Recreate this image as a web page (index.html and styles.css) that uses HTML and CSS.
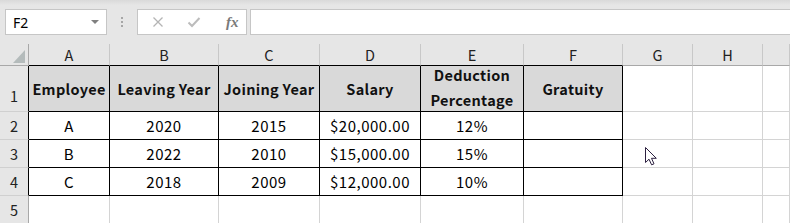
FILE: index.html
```html
<!DOCTYPE html>
<html>
	<head>
		<title>Gratuity</title>
		<link rel="stylesheet" href="styles.css">
	</head>
	<body>

		<div class="barra">
			<div class="nomeCaixa">
				<span class="nomeTexto">F2</span>
				<span class="seta"></span>
			</div>
			<div class="pontos">
				<span></span><span></span><span></span>
			</div>
			<div class="botoes">
				<svg class="icone" width="12" height="12" viewBox="0 0 12 12">
					<path d="M1.5 1.5 L10.5 10.5 M10.5 1.5 L1.5 10.5" stroke="#b4b4b4" stroke-width="1.3" fill="none"/>
				</svg>
				<svg class="icone" width="14" height="12" viewBox="0 0 14 12">
					<path d="M1.5 6.5 L5 10 L12.5 2" stroke="#bcbcbc" stroke-width="2" fill="none"/>
				</svg>
				<span class="fx">fx</span>
			</div>
			<div class="formula"></div>
		</div>

		<div class="planilha">
			<div class="canto"><span class="triangulo"></span></div>
			<div class="colCab">A</div>
			<div class="colCab">B</div>
			<div class="colCab">C</div>
			<div class="colCab">D</div>
			<div class="colCab">E</div>
			<div class="colCab">F</div>
			<div class="colCab fora">G</div>
			<div class="colCab fora">H</div>
			<div class="colCab fora"></div>

			<div class="linCab dentro baixo">1</div>
			<div class="cel tab titulo">Employee</div>
			<div class="cel tab titulo">Leaving Year</div>
			<div class="cel tab titulo">Joining Year</div>
			<div class="cel tab titulo">Salary</div>
			<div class="cel tab titulo duas">Deduction<br>Percentage</div>
			<div class="cel tab titulo">Gratuity</div>
			<div class="cel"></div>
			<div class="cel"></div>
			<div class="cel"></div>

			<div class="linCab dentro">2</div>
			<div class="cel tab">A</div>
			<div class="cel tab">2020</div>
			<div class="cel tab">2015</div>
			<div class="cel tab">$20,000.00</div>
			<div class="cel tab">12%</div>
			<div class="cel tab"></div>
			<div class="cel"></div>
			<div class="cel"></div>
			<div class="cel"></div>

			<div class="linCab dentro">3</div>
			<div class="cel tab">B</div>
			<div class="cel tab">2022</div>
			<div class="cel tab">2010</div>
			<div class="cel tab">$15,000.00</div>
			<div class="cel tab">15%</div>
			<div class="cel tab"></div>
			<div class="cel"></div>
			<div class="cel"></div>
			<div class="cel"></div>

			<div class="linCab dentro">4</div>
			<div class="cel tab">C</div>
			<div class="cel tab">2018</div>
			<div class="cel tab">2009</div>
			<div class="cel tab">$12,000.00</div>
			<div class="cel tab">10%</div>
			<div class="cel tab"></div>
			<div class="cel"></div>
			<div class="cel"></div>
			<div class="cel"></div>

			<div class="linCab">5</div>
			<div class="cel"></div>
			<div class="cel"></div>
			<div class="cel"></div>
			<div class="cel"></div>
			<div class="cel"></div>
			<div class="cel"></div>
			<div class="cel"></div>
			<div class="cel"></div>
			<div class="cel"></div>

			<svg class="cursor" width="14" height="20" viewBox="0 0 14 20">
				<path d="M0.5 0.5 L0.5 15.5 L4 12.2 L6.6 17.8 L9 16.8 L6.5 11.3 L11.3 11.3 Z" fill="#ffffff" stroke="#2c2040" stroke-width="1"/>
			</svg>
		</div>

	</body>
</html>
```

FILE: styles.css
```css
   body {
		margin: 0;
		width: 790px;
		height: 223px;
		overflow: hidden;
		background-color: #ffffff;
		font-family: "Noto Sans CJK JP", "Noto Sans", sans-serif;
   }

   .barra {
		height: 44px;
		background: linear-gradient(#d9d9d9, #e6e6e6 5px);
		display: flex;
		align-items: flex-start;
		padding-top: 9px;
		padding-left: 5px;
		box-sizing: border-box;
   }

   .nomeCaixa {
		width: 102px;
		height: 26px;
		box-sizing: border-box;
		background-color: #ffffff;
		border: 1px solid #c6c6c6;
		display: flex;
		align-items: center;
		justify-content: space-between;
		padding-left: 7px;
		padding-right: 7px;
   }

   .nomeTexto {
		font-family: "Noto Sans", sans-serif;
		font-size: 14px;
		color: #000000;
   }

   .seta {
		width: 0;
		height: 0;
		border-left: 4px solid transparent;
		border-right: 4px solid transparent;
		border-top: 4px solid #808080;
   }

   .pontos {
		width: 30px;
		height: 26px;
		display: flex;
		flex-direction: column;
		align-items: center;
		justify-content: center;
		gap: 2px;
   }

   .pontos span {
		width: 2px;
		height: 2px;
		background-color: #a6a6a6;
   }

   .botoes {
		width: 110px;
		height: 26px;
		box-sizing: border-box;
		background-color: #ffffff;
		border: 1px solid #c6c6c6;
		display: flex;
		align-items: center;
		padding-left: 14px;
		gap: 23px;
   }

   .fx {
		font-family: "Liberation Serif", serif;
		font-style: italic;
		font-weight: 700;
		font-size: 15px;
		color: #7a7a7a;
		margin-left: 2px;
   }

   .formula {
		flex: 1;
		height: 26px;
		margin-left: 3px;
		box-sizing: border-box;
		background-color: #ffffff;
		border: 1px solid #c6c6c6;
		border-right: none;
   }

   .planilha {
		position: relative;
		display: grid;
		grid-template-columns: 29px 81px 109px 101px 101px 103px 99px 70px 70px 1fr;
		grid-template-rows: 22px 46px 28px 28px 28px 28px;
		font-size: 15px;
		letter-spacing: 0.5px;
		color: #000000;
   }

   .planilha > div {
		box-sizing: border-box;
		border-right: 1px solid #d4d4d4;
		border-bottom: 1px solid #d4d4d4;
		display: flex;
		align-items: center;
		justify-content: center;
		line-height: 20px;
   }

   .canto {
		background-color: #e6e6e6;
		position: relative;
   }

   .planilha > .canto {
		border-right: 1px solid #a8a8a8;
		border-bottom: 1px solid #a8a8a8;
   }

   .triangulo {
		position: absolute;
		right: 3px;
		bottom: 2px;
		width: 0;
		height: 0;
		border-left: 12px solid transparent;
		border-bottom: 13px solid #b4bbbb;
   }

   .planilha > .colCab {
		background-color: #e6e6e6;
		border-right: 1px solid #c8c8c8;
		border-bottom: 1px solid #000000;
		color: #222222;
		padding-top: 1px;
		letter-spacing: 0;
		font-size: 14.5px;
   }

   .planilha > .colCab.fora {
		border-bottom: 1px solid #a8a8a8;
   }

   .planilha > .linCab {
		background-color: #e6e6e6;
		border-right: 1px solid #a8a8a8;
		border-bottom: 1px solid #d0d0d0;
		color: #222222;
		align-items: flex-end;
		padding-bottom: 3px;
		letter-spacing: 0;
		font-size: 14.5px;
   }

   .planilha > .linCab.dentro {
		border-right: 1px solid #000000;
   }

   .planilha > .linCab.baixo {
		padding-bottom: 5px;
   }

   .planilha > .tab {
		border-right: 1px solid #000000;
		border-bottom: 1px solid #000000;
   }

   .planilha > .titulo {
		background-color: #d9d9d9;
		font-weight: 700;
		font-size: 14.5px;
		letter-spacing: 0.3px;
		color: #111111;
   }

   .planilha > .duas {
		text-align: center;
		line-height: 25px;
		padding-bottom: 3px;
   }

   .cursor {
		position: absolute;
		left: 645px;
		top: 103px;
   }
```
